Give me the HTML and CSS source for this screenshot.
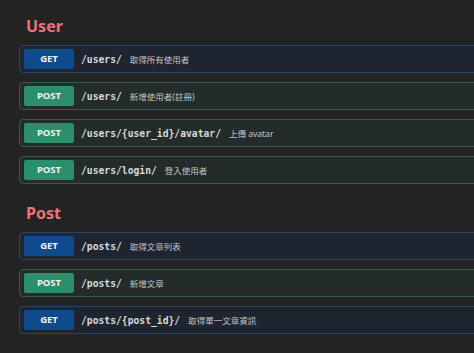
FILE: index.html
```html
<!DOCTYPE html>
<html lang="zh-Hant">
  <head>
    <meta charset="UTF-8">
    <meta name="viewport" content="width=device-width, initial-scale=1.0">
    <link rel="stylesheet" href="styles.css">
    <title>API</title>
  </head>
  <body>
    <div class="wrapper">
      <section class="tag">
        <h2 class="tag-title">User</h2>
        <ul class="ops">
          <li class="op get"><span class="method">GET</span><span class="path">/users/</span><span class="desc">取得所有使用者</span></li>
          <li class="op post"><span class="method">POST</span><span class="path">/users/</span><span class="desc">新增使用者(註冊)</span></li>
          <li class="op post"><span class="method">POST</span><span class="path">/users/{user_id}/avatar/</span><span class="desc">上傳 avatar</span></li>
          <li class="op post"><span class="method">POST</span><span class="path">/users/login/</span><span class="desc">登入使用者</span></li>
        </ul>
      </section>
      <section class="tag">
        <h2 class="tag-title">Post</h2>
        <ul class="ops">
          <li class="op get"><span class="method">GET</span><span class="path">/posts/</span><span class="desc">取得文章列表</span></li>
          <li class="op post"><span class="method">POST</span><span class="path">/posts/</span><span class="desc">新增文章</span></li>
          <li class="op get"><span class="method">GET</span><span class="path">/posts/{post_id}/</span><span class="desc">取得單一文章資訊</span></li>
        </ul>
      </section>
    </div>
  </body>
</html>
```

FILE: styles.css
```css
:root {
--bg: #232323;
--get: #0e4a8c;
--get-bg: #1f2530;
--get-line: #2a4866;
--post: #2b8f6c;
--post-bg: #232c2a;
--post-line: #3a5a50;
}
* {
margin: 0;
padding: 0;
box-sizing: border-box;
}
html,
body {
width: 100%;
height: 100%;
overflow: hidden;
}
body {
background-color: var(--bg);
font-family: "Noto Sans", "Noto Sans CJK TC", sans-serif;
}
.wrapper {
padding: 14px 0 0 19px;
}
.tag {
margin-bottom: 17px;
}
.tag-title {
color: #ea7479;
font-size: 16px;
font-weight: 700;
line-height: 24px;
padding-left: 7px;
margin-bottom: 7px;
}
.ops {
list-style: none;
margin-right: -10px;
}
.op {
display: flex;
align-items: center;
height: 28px;
padding: 0 4px;
border: 1px solid;
border-radius: 4px;
margin-bottom: 9px;
}
.op.get {
background-color: var(--get-bg);
border-color: var(--get-line);
}
.op.post {
background-color: var(--post-bg);
border-color: var(--post-line);
}
.method {
width: 50px;
height: 20px;
line-height: 20px;
text-align: center;
border-radius: 2px;
color: #f2f2f2;
font-size: 9.5px;
font-weight: 700;
margin-right: 7px;
}
.get .method {
background-color: var(--get);
}
.post .method {
background-color: var(--post);
}
.path {
font-family: "DejaVu Sans Mono", monospace;
font-weight: 700;
font-size: 9.7px;
color: #d8d8d8;
margin-right: 8px;
}
.desc {
font-size: 8.5px;
color: #c4c4c4;
}
```
